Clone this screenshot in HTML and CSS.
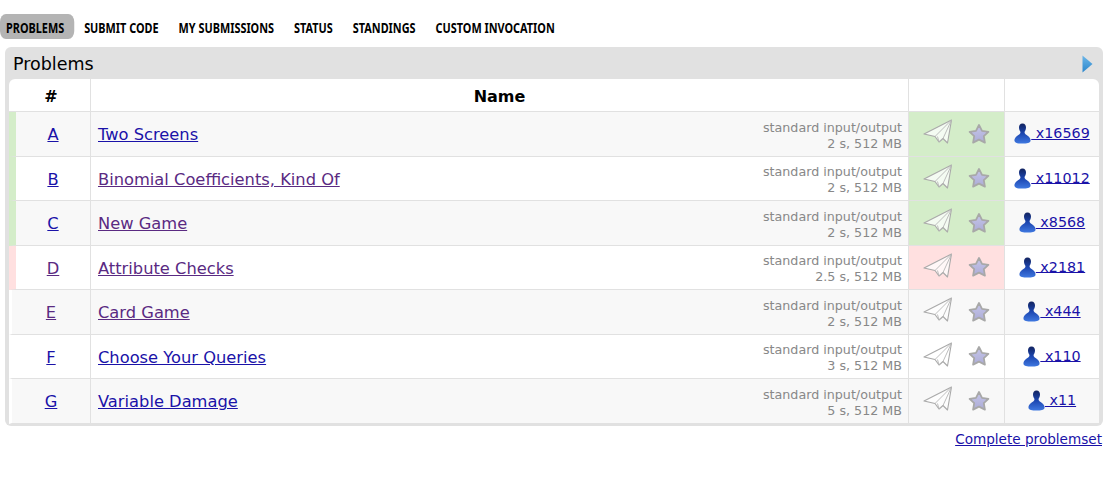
FILE: index.html
```html
<!DOCTYPE html>
<html lang="en">
<head>
  <meta charset="UTF-8" />
  <title>Problems</title>
  <link rel="stylesheet" href="styles.css">
</head>
<body>

  <svg class="defs" width="0" height="0">
    <defs>
      <linearGradient id="starFill" x1="0" y1="0" x2="0" y2="1">
        <stop offset="0" stop-color="#c6c6ea"/>
        <stop offset="1" stop-color="#acacd6"/>
      </linearGradient>
      <linearGradient id="userFill" x1="0" y1="0" x2="0" y2="1">
        <stop offset="0" stop-color="#12235f"/>
        <stop offset="0.5" stop-color="#1c46b0"/>
        <stop offset="1" stop-color="#3f78e0"/>
      </linearGradient>
      <linearGradient id="arrowFill" x1="0" y1="0" x2="0" y2="1">
        <stop offset="0" stop-color="#6cb6e8"/>
        <stop offset="1" stop-color="#2a86cc"/>
      </linearGradient>
      <symbol id="plane" viewBox="0 0 30 26">
        <path d="M28.500 1 L1 15 L12 17.500 L16 23 L20 19.500 L24.500 24 Z" fill="#fff" fill-opacity="0.75" stroke="#a9a9a9" stroke-width="1.100" stroke-linejoin="round"/>
        <path d="M28.500 1 L12 17.500 M28.500 1 L20 19.500 L16 23 L14.500 17.500" fill="none" stroke="#b5b5b5" stroke-width="0.900"/>
      </symbol>
      <symbol id="star" viewBox="0 0 22 22">
        <path d="M11 2 L14 7.800 L20.400 8.800 L15.800 13.200 L16.900 19.600 L11 16.600 L5.100 19.600 L6.200 13.200 L1.600 8.800 L8 7.800 Z" fill="url(#starFill)" stroke="#a8a8a8" stroke-width="1.800" stroke-linejoin="round"/>
      </symbol>
      <symbol id="user" viewBox="0 0 17 21">
        <path d="M8.500 0.500 C11 0.500 12 2.500 12 4.500 C12 6.500 11 8 10.500 9 C10.500 11 12 11.500 14 13 C16 14.500 16.800 16.500 16.500 18 C16 20 13 20.500 8.500 20.500 C4 20.500 1 20 0.500 18 C0.200 16.500 1 14.500 3 13 C5 11.500 6.500 11 6.500 9 C6 8 5 6.500 5 4.500 C5 2.500 6 0.500 8.500 0.500 Z" fill="url(#userFill)"/>
      </symbol>
    </defs>
  </svg>

  <nav class="menu">
    <a class="menu-item current" href="#">PROBLEMS</a>
    <a class="menu-item" href="#">SUBMIT CODE</a>
    <a class="menu-item" href="#">MY SUBMISSIONS</a>
    <a class="menu-item" href="#">STATUS</a>
    <a class="menu-item" href="#">STANDINGS</a>
    <a class="menu-item" href="#">CUSTOM INVOCATION</a>
  </nav>

  <div class="panel">
    <div class="panel-title">
      <span>Problems</span>
      <svg class="arrow" width="11" height="18" viewBox="0 0 11 18"><path d="M0.500 0.500 L10.500 9 L0.500 17.500 Z" fill="url(#arrowFill)"/></svg>
    </div>

    <table class="problems">
      <tr class="head">
        <th class="c-id">#</th>
        <th class="c-name">Name</th>
        <th class="c-act"></th>
        <th class="c-count"></th>
      </tr>

      <tr class="odd">
        <td class="c-id ok"><a href="#">A</a></td>
        <td class="c-name"><div class="name-wrap"><a href="#">Two Screens</a><div class="limits">standard input/output<br>2 s, 512 MB</div></div></td>
        <td class="c-act bg-ok"><svg class="i-plane"><use href="#plane"/></svg><svg class="i-star"><use href="#star"/></svg></td>
        <td class="c-count"><svg class="i-user"><use href="#user"/></svg><a href="#">&nbsp;x16569</a></td>
      </tr>
      <tr>
        <td class="c-id ok"><a href="#">B</a></td>
        <td class="c-name"><div class="name-wrap"><a class="seen" href="#">Binomial Coefficients, Kind Of</a><div class="limits">standard input/output<br>2 s, 512 MB</div></div></td>
        <td class="c-act bg-ok"><svg class="i-plane"><use href="#plane"/></svg><svg class="i-star"><use href="#star"/></svg></td>
        <td class="c-count"><svg class="i-user"><use href="#user"/></svg><a href="#">&nbsp;x11012</a></td>
      </tr>
      <tr class="odd">
        <td class="c-id ok"><a href="#">C</a></td>
        <td class="c-name"><div class="name-wrap"><a class="seen" href="#">New Game</a><div class="limits">standard input/output<br>2 s, 512 MB</div></div></td>
        <td class="c-act bg-ok"><svg class="i-plane"><use href="#plane"/></svg><svg class="i-star"><use href="#star"/></svg></td>
        <td class="c-count"><svg class="i-user"><use href="#user"/></svg><a href="#">&nbsp;x8568</a></td>
      </tr>
      <tr>
        <td class="c-id bad"><a class="seen" href="#">D</a></td>
        <td class="c-name"><div class="name-wrap"><a class="seen" href="#">Attribute Checks</a><div class="limits">standard input/output<br>2.5 s, 512 MB</div></div></td>
        <td class="c-act bg-bad"><svg class="i-plane"><use href="#plane"/></svg><svg class="i-star"><use href="#star"/></svg></td>
        <td class="c-count"><svg class="i-user"><use href="#user"/></svg><a href="#">&nbsp;x2181</a></td>
      </tr>
      <tr class="odd">
        <td class="c-id none"><a class="seen" href="#">E</a></td>
        <td class="c-name"><div class="name-wrap"><a class="seen" href="#">Card Game</a><div class="limits">standard input/output<br>2 s, 512 MB</div></div></td>
        <td class="c-act"><svg class="i-plane"><use href="#plane"/></svg><svg class="i-star"><use href="#star"/></svg></td>
        <td class="c-count"><svg class="i-user"><use href="#user"/></svg><a href="#">&nbsp;x444</a></td>
      </tr>
      <tr>
        <td class="c-id none"><a href="#">F</a></td>
        <td class="c-name"><div class="name-wrap"><a href="#">Choose Your Queries</a><div class="limits">standard input/output<br>3 s, 512 MB</div></div></td>
        <td class="c-act"><svg class="i-plane"><use href="#plane"/></svg><svg class="i-star"><use href="#star"/></svg></td>
        <td class="c-count"><svg class="i-user"><use href="#user"/></svg><a href="#">&nbsp;x110</a></td>
      </tr>
      <tr class="odd">
        <td class="c-id none"><a href="#">G</a></td>
        <td class="c-name"><div class="name-wrap"><a href="#">Variable Damage</a><div class="limits">standard input/output<br>5 s, 512 MB</div></div></td>
        <td class="c-act"><svg class="i-plane"><use href="#plane"/></svg><svg class="i-star"><use href="#star"/></svg></td>
        <td class="c-count"><svg class="i-user"><use href="#user"/></svg><a href="#">&nbsp;x11</a></td>
      </tr>
    </table>
  </div>

  <div class="footer-link"><a href="#">Complete problemset</a></div>

</body>
</html>
```
FILE: styles.css
```css
body {
  margin: 0;
  padding-top: 14px;
  background: #fff;
  font-family: "DejaVu Sans", Verdana, sans-serif;
  color: #000;
}
a {
  color: #1a12a8;
}
a.seen {
  color: #5a2a82;
}
.defs {
  position: absolute;
}

/* top menu: no narrow font is installed, so the row is squeezed to 75% */
.menu {
  display: flex;
  gap: 6.670px;
  height: 25px;
  transform: scaleX(0.75);
  transform-origin: left center;
}
.menu-item {
  padding: 0 13.330px 0 6.670px;
  font-family: "Noto Sans", "Open Sans", sans-serif;
  font-size: 14.500px;
  font-weight: bold;
  line-height: 27px;
  color: #000;
  text-decoration: none;
  white-space: nowrap;
}
.menu-item.current {
  padding-left: 8px;
  background: #b4b4b4;
  border-radius: 8px;
}

/* panel */
.panel {
  margin: 8px 11px 0 5px;
  padding: 0 4px 2px;
  background: #e1e1e1;
  border-radius: 6px;
}
.panel-title {
  display: flex;
  justify-content: space-between;
  align-items: center;
  height: 32px;
  padding: 2px 6px 0 4px;
  box-sizing: border-box;
  font-size: 17.500px;
}

/* table */
.problems {
  width: 100%;
  table-layout: fixed;
  border-collapse: separate;
  border-spacing: 0;
  background: #fff;
  border-radius: 6px 6px 0 0;
}
.problems th,
.problems td {
  padding: 0;
  border-bottom: 1px solid #e1e1e1;
  border-right: 1px solid #e1e1e1;
  text-align: center;
}
.problems th:last-child,
.problems td:last-child {
  border-right: none;
}
.head th {
  height: 33px;
  padding-top: 3px;
  box-sizing: border-box;
  font-size: 16px;
}
.head th.c-id {
  padding-left: 3px;
}
.problems td {
  height: 43.500px;
}
.problems td.c-id {
  padding-top: 2px;
  box-sizing: border-box;
  height: 44.500px;
}
.odd td {
  background: #f8f8f8;
}
.c-id {
  width: 82px;
  box-sizing: border-box;
  font-size: 16.300px;
}
.c-name {
  font-size: 16.300px;
}
.c-act {
  width: 96px;
}
.c-count {
  width: 94px;
  font-size: 14.300px;
}
td.ok {
  border-left: 7px solid #d4edc9;
}
td.bad {
  border-left: 7px solid #ffe0e0;
}
td.none {
  border-left: 3px solid #fff;
}
.odd td.bg-ok,
td.bg-ok {
  background: #d4edc9;
}
td.bg-bad {
  background: #ffe0e0;
}

.name-wrap {
  display: flex;
  justify-content: space-between;
  align-items: center;
  padding: 2px 6px 0 7px;
}
.limits {
  margin-top: 2px;
  font-size: 12.700px;
  line-height: 16px;
  color: #888;
  text-align: right;
}

.i-plane {
  width: 30px;
  height: 26px;
  vertical-align: middle;
  margin: 0 15px 3px 0;
}
.i-star {
  width: 22px;
  height: 22px;
  vertical-align: middle;
}
.i-user {
  width: 17px;
  height: 21px;
  vertical-align: middle;
}

.footer-link {
  margin: 5px 12px 0 0;
  text-align: right;
  font-size: 13.600px;
}
```
